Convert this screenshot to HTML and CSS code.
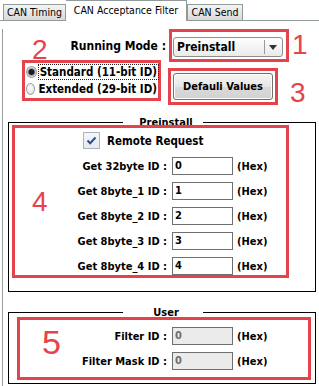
FILE: index.html
```html
<!DOCTYPE html>
<html>
<head>
<meta charset="utf-8">
<link rel="stylesheet" href="styles.css">
</head>
<body>
<div class="tabs">
  <div class="tab t1">CAN Timing</div>
  <div class="tab t2 active">CAN Acceptance Filter</div>
  <div class="tab t3">CAN Send</div>
</div>
<div class="panel">
  <div class="row1">
    <span class="ann ann2">2</span>
    <span class="lbl mode-lbl">Running Mode :</span>
    <div class="mark mark1">
      <div class="combo">
        <span class="combo-text">Preinstall</span>
        <span class="combo-btn"><span class="tri"></span></span>
      </div>
    </div>
    <span class="ann ann1">1</span>
  </div>
  <div class="row2">
    <div class="mark mark2">
      <div class="radio"><span class="rb on"></span><span class="rtext focus">Standard (11-bit ID)</span></div>
      <div class="radio"><span class="rb"></span><span class="rtext">Extended (29-bit ID)</span></div>
    </div>
    <div class="mark mark3"><button class="btn">Defauli Values</button></div>
    <span class="ann ann3">3</span>
  </div>
  <div class="group pre">
    <span class="group-title">Preinstall</span>
    <div class="mark mark4">
      <span class="ann ann4">4</span>
      <div class="chkrow">
        <span class="chk"><svg width="15" height="15" viewBox="0 0 15 15"><path d="M3.5 7.5 L6.2 10.2 L11.5 4.5" fill="none" stroke="#2b4f86" stroke-width="2"/></svg></span>
        <span class="lbl chk-lbl">Remote Request</span>
      </div>
      <div class="fields f4">
        <span class="lbl">Get 32byte ID :</span><span class="inp">0</span><span class="lbl hex">(Hex)</span>
        <span class="lbl">Get 8byte_1 ID :</span><span class="inp">1</span><span class="lbl hex">(Hex)</span>
        <span class="lbl">Get 8byte_2 ID :</span><span class="inp">2</span><span class="lbl hex">(Hex)</span>
        <span class="lbl">Get 8byte_3 ID :</span><span class="inp">3</span><span class="lbl hex">(Hex)</span>
        <span class="lbl">Get 8byte_4 ID :</span><span class="inp">4</span><span class="lbl hex">(Hex)</span>
      </div>
    </div>
  </div>
  <div class="group user">
    <span class="group-title">User</span>
    <div class="mark mark5">
      <span class="ann ann5">5</span>
      <div class="fields f5">
        <span class="lbl">Filter ID :</span><span class="inp dis">0</span><span class="lbl hex">(Hex)</span>
        <span class="lbl">Filter Mask ID :</span><span class="inp dis">0</span><span class="lbl hex">(Hex)</span>
      </div>
    </div>
  </div>
</div>
</body>
</html>
```
FILE: styles.css
```css
html, body {
  margin: 0;
  padding: 0;
  background: #fff;
}
body {
  width: 319px;
  height: 386px;
  overflow: hidden;
  font-family: "DejaVu Sans Condensed", "DejaVu Sans", sans-serif;
  font-stretch: condensed;
  color: #000;
}

/* tabs */
.tabs {
  display: flex;
  align-items: flex-end;
  height: 20px;
  padding-left: 3px;
  border-bottom: 1px solid #919b9c;
}
.tab {
  box-sizing: border-box;
  height: 16px;
  border: 1px solid #919b9c;
  border-bottom: none;
  background: linear-gradient(#f4f4f4, #d9d9d9);
  font-size: 10.5px;
  line-height: 15px;
  text-align: center;
  white-space: nowrap;
}
.t1 { width: 63px; }
.t2 { width: 121px; }
.t3 { width: 56px; }
.tab.active {
  height: 21px;
  margin-bottom: -1px;
  background: #fff;
  line-height: 19px;
  border-left: none;
}

/* panel */
.panel {
  margin-left: 2px;
  height: 365px;
  border-left: 1px solid #9c9c9c;
}

.ann {
  font-family: "Liberation Sans", Arial, sans-serif;
  font-stretch: normal;
  font-size: 28px;
  line-height: 28px;
  color: #e6434a;
}

.mark {
  border: 3px solid #e5434b;
}

.lbl {
  font-weight: bold;
  font-size: 11px;
  white-space: nowrap;
}

.row1 {
  display: flex;
  align-items: center;
  height: 33px;
  margin-top: 8px;
}
.ann2 {
  align-self: flex-start;
  margin-top: 7px;
  margin-left: 29px;
  width: 16px;
}
.mode-lbl {
  width: 118px;
  text-align: right;
  font-size: 12px;
}
.mark1 {
  margin-left: 3px;
  padding: 5px 3px 2px 1px;
}
.combo {
  box-sizing: border-box;
  width: 110px;
  height: 20px;
  border: 1px solid #8d8f8f;
  border-radius: 3px;
  background: linear-gradient(#fefefe, #eaeaea);
  display: flex;
  align-items: center;
}
.combo-text {
  flex: 1;
  padding-left: 3px;
  font-weight: bold;
  font-size: 12px;
}
.combo-btn {
  width: 16px;
  height: 14px;
  border-left: 1px solid #9a9a9a;
  display: flex;
  justify-content: center;
  align-items: center;
  margin-right: 1px;
}
.tri {
  width: 0;
  height: 0;
  border-left: 4px solid transparent;
  border-right: 4px solid transparent;
  border-top: 5px solid #333;
}
.ann1 {
  align-self: flex-start;
  margin-top: 2px;
  margin-left: 3px;
}

.row2 {
  display: flex;
  align-items: flex-start;
  margin-top: -2px;
}
.mark2 {
  margin-left: 19px;
  width: 133px;
  padding-bottom: 1px;
}
.radio {
  display: flex;
  align-items: center;
  height: 17px;
}
.rb {
  box-sizing: border-box;
  width: 12px;
  height: 12px;
  margin-left: 1px;
  border-radius: 50%;
  border: 1px solid #9aa3ad;
  background: radial-gradient(circle at 40% 40%, #fdfdfd, #dcdcdc);
}
.rb.on {
  background: radial-gradient(circle, #1f1f1f 0, #1f1f1f 2.5px, #a9a9a9 3.5px, #e8e8e8 5px);
}
.rtext {
  margin-left: 2px;
  padding: 0 1px;
  font-weight: bold;
  font-size: 11.5px;
  line-height: 14px;
  white-space: nowrap;
}
.rtext.focus {
  outline: 1px dotted #222;
  outline-offset: 0;
}
.mark3 {
  margin-left: 7px;
  margin-top: 8px;
  padding: 2px;
}
.btn {
  display: block;
  box-sizing: border-box;
  width: 100px;
  height: 27px;
  padding: 0;
  border: 1px solid #707070;
  border-radius: 3px;
  background: linear-gradient(#f6f6f6, #e6e6e6 50%, #dadada 51%, #d2d2d2);
  box-shadow: inset 0 0 0 1px #fcfcfc;
  font-family: inherit;
  font-stretch: condensed;
  font-weight: bold;
  font-size: 11px;
  color: #000;
}
.ann3 {
  margin-top: 19px;
  margin-left: 12px;
}

/* group boxes */
.group {
  position: relative;
  box-sizing: border-box;
  width: 308px;
  margin-left: 5px;
  border: 1px solid #000;
}
.group-title {
  position: absolute;
  top: -7px;
  left: 114px;
  box-sizing: border-box;
  width: 80px;
  padding-left: 6px;
  background: #fff;
  text-align: center;
  font-weight: bold;
  font-size: 11px;
  line-height: 13px;
}
.pre {
  margin-top: 15px;
  padding-bottom: 13px;
}
.user {
  margin-top: 20px;
  padding-bottom: 3px;
}

.mark4 {
  position: relative;
  width: 271px;
  margin: 2px 0 0 3px;
}
.ann4 {
  position: absolute;
  left: 17px;
  top: 60px;
}
.chkrow {
  display: flex;
  align-items: center;
  height: 17px;
  margin-top: 4px;
  padding-left: 68px;
}
.chk {
  box-sizing: border-box;
  width: 17px;
  height: 17px;
  border: 1px solid #a9b3c1;
  background: linear-gradient(#f4f6f9, #e6eaf0);
  display: flex;
  align-items: center;
  justify-content: center;
}
.chk-lbl {
  margin-left: 7px;
  font-size: 11.5px;
}
.fields {
  display: grid;
  grid-auto-rows: 18px;
  row-gap: 7px;
  column-gap: 5px;
  align-items: center;
}
.f4 {
  grid-template-columns: 152px 61px auto;
  margin-top: 8px;
}
.fields .lbl {
  text-align: right;
}
.fields .hex {
  text-align: left;
  margin-left: -1px;
}
.inp {
  box-sizing: border-box;
  height: 18px;
  border: 1px solid #6f6f6f;
  background: #fff;
  padding-left: 2px;
  font-weight: bold;
  font-size: 11px;
  line-height: 16px;
}
.inp.dis {
  background: #ebebeb;
  color: #6e6e6e;
}

.mark5 {
  position: relative;
  width: 288px;
  margin: 4px 0 0 8px;
  padding: 7px 0;
}
.ann5 {
  position: absolute;
  left: 22px;
  top: 5px;
  font-size: 34px;
  line-height: 34px;
}
.f5 {
  grid-template-columns: 147px 61px auto;
}
```
